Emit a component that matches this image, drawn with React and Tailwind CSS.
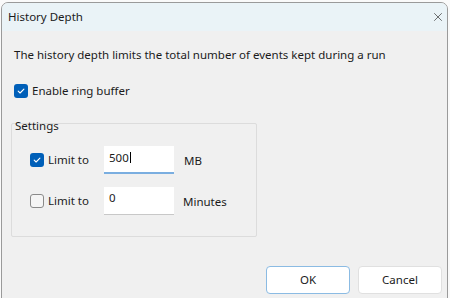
import { X } from 'lucide-react'

function CheckBox({ checked }) {
  return checked ? (
    <span className="flex h-[14px] w-[14px] shrink-0 items-center justify-center rounded-[3px] bg-[#005fb8]">
      <svg width="10" height="10" viewBox="0 0 10 10" fill="none">
        <path d="M2.2 5.2 L4.1 7 L7.9 3.2" stroke="white" strokeWidth="1.1" strokeLinecap="round" strokeLinejoin="round" />
      </svg>
    </span>
  ) : (
    <span className="h-[14px] w-[14px] shrink-0 rounded-[3px] border border-[#8a8a8a] bg-[#f5f5f5]" />
  )
}

function LimitRow({ checked, value, unit, unitGap, focused }) {
  return (
    <div className="flex items-center">
      <label className="flex w-[74px] items-center gap-[4px]">
        <CheckBox checked={checked} />
        <span>Limit to</span>
      </label>
      <div
        className={
          focused
            ? 'flex h-[28px] w-[70px] items-start border-b-2 border-[#7aaee0] bg-white px-[5px] pt-[3px] leading-[17px]'
            : 'flex h-[28px] w-[70px] items-start border-b border-[#c8c8c8] bg-white px-[5px] pt-[2px] leading-[17px]'
        }
      >
        <span>{value}</span>
        {focused && <span className="ml-[1px] mt-[3px] h-[11px] w-px bg-black" />}
      </div>
      <span className={unitGap + ' mt-[2px]'}>{unit}</span>
    </div>
  )
}

export default function App() {
  return (
    <div
      className="h-[298px] w-[450px] overflow-hidden bg-[#fafafa] pt-[2px] text-[11.5px] text-[#1b1b1b]"
      style={{ fontFamily: '"Segoe UI", "Noto Sans", sans-serif' }}
    >
      <div className="ml-px mr-[2px] h-[300px] overflow-hidden rounded-t-[7px] border border-[#9a9a9a] bg-[#f0f0f0]">
        <div className="flex h-[28px] items-center justify-between bg-[#eaf3f7] pl-[6px] pr-[2px]">
          <span>History Depth</span>
          <X size={14} strokeWidth={1.2} className="text-[#333]" />
        </div>

        <div className="px-[9px] pt-[15px]">
          <p className="pl-[3px] leading-[18px]">The history depth limits the total number of events kept during a run</p>

          <label className="mt-[18px] flex h-[18px] items-center gap-[4px] pl-[3px]">
            <CheckBox checked />
            <span>Enable ring buffer</span>
          </label>

          <div className="relative mt-[23px] h-[114px] w-[246px] rounded-[2px] border border-[#dcdcdc] pl-[18px] pt-[22px]">
            <span className="absolute -top-[7px] left-[2px] px-px leading-[17px]">Settings</span>
            <div className="flex flex-col gap-[13px]">
              <LimitRow checked value="500" unit="MB" unitGap="ml-[10px]" focused />
              <LimitRow value="0" unit="Minutes" unitGap="ml-[9px]" />
            </div>
          </div>
        </div>

        <div className="mt-[29px] flex justify-end gap-[8px] pr-[5px]">
          <button className="h-[28px] w-[84px] rounded-[4px] border border-[#8bbbe3] bg-white">OK</button>
          <button className="h-[28px] w-[84px] rounded-[4px] border border-[#e0e0e0] bg-white">Cancel</button>
        </div>
      </div>
    </div>
  )
}
